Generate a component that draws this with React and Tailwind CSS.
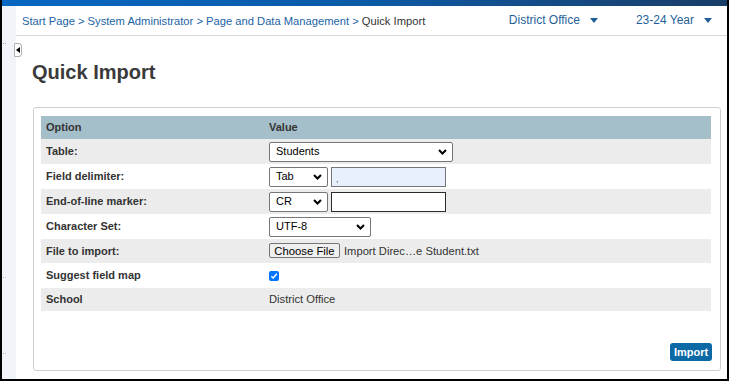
import React from "react";

const font = { fontFamily: '"Liberation Sans", Arial, sans-serif' };

function Chevron() {
  return (
    <svg width="9" height="6" viewBox="0 0 9 6" className="shrink-0">
      <path d="M1 1 L4.5 4.5 L8 1" fill="none" stroke="#000" strokeWidth="2" />
    </svg>
  );
}

function Caret() {
  return (
    <svg width="8" height="5" viewBox="0 0 8 5" className="shrink-0">
      <path d="M0 0 L8 0 L4 5 Z" fill="#1f5f99" />
    </svg>
  );
}

function Select({ w, label }) {
  return (
    <div
      className="h-[20px] border border-[#767676] rounded-[2px] bg-white flex items-center justify-between pl-[6px] pr-[5px] text-[11px] text-black"
      style={{ width: w }}
    >
      <span>{label}</span>
      <Chevron />
    </div>
  );
}

function Row({ label, h, gray, bold = true, children }) {
  return (
    <div className={`flex items-center ${gray ? "bg-[#ececec]" : "bg-white"}`} style={{ height: h }}>
      <div className={`w-[228px] pl-[5px] text-[11px] text-[#333] ${bold ? "font-bold" : ""}`}>{label}</div>
      <div className="flex items-center gap-[3px] text-[11px] text-[#333]">{children}</div>
    </div>
  );
}

export default function App() {
  return (
    <div
      className="relative w-[729px] h-[381px] bg-white border-l-2 border-r-2 border-b-2 border-black flex flex-col overflow-hidden"
      style={font}
    >
      <div className="h-[6px] shrink-0 bg-gradient-to-r from-[#0867c2] via-[#0a5aa6] to-[#183d68]" />
      <div className="flex flex-1">
        <div className="relative w-[14px] shrink-0 bg-[#f1f5f9]">
          <div className="absolute left-[1px] top-[37px] flex gap-[1px]">
            <div className="w-[1px] h-[1px] bg-[#aaa]" />
            <div className="w-[1px] h-[1px] bg-[#aaa]" />
          </div>
          <div className="absolute left-[1px] top-[271px] flex gap-[1px]">
            <div className="w-[1px] h-[1px] bg-[#bbb]" />
            <div className="w-[1px] h-[1px] bg-[#bbb]" />
          </div>
          <div className="absolute left-[1px] top-[347px] flex gap-[1px]">
            <div className="w-[1px] h-[1px] bg-[#bbb]" />
            <div className="w-[1px] h-[1px] bg-[#bbb]" />
          </div>
        </div>
        <div className="flex-1 flex flex-col">
          <div className="h-[30px] shrink-0 border-b border-[#d6d6d6] flex justify-between pl-[6px] pr-[15px]">
            <div className="mt-[9px] text-[11.2px] leading-[13px] text-[#1b63a5]">
              Start Page &gt; System Administrator &gt; Page and Data Management &gt;{" "}
              <span className="text-[#333]">Quick Import</span>
            </div>
            <div className="mt-[7px] flex items-center h-[14px] text-[12px] leading-[14px] text-[#1f5f99]">
              <span>District Office</span>
              <span className="ml-[10px]"><Caret /></span>
              <span className="ml-[38px]">23-24 Year</span>
              <span className="ml-[10px]"><Caret /></span>
            </div>
          </div>
          <div className="mt-[25px] pl-[16px] text-[20px] leading-[22px] font-bold text-[#3a3a3a]">Quick Import</div>
          <div className="mt-[24px] ml-[17px] w-[688px] h-[264px] border border-[#cfcfcf] rounded-[3px] pt-[8px] pl-[7px] flex flex-col">
            <div className="w-[670px]">
              <div className="h-[23px] bg-[#a4bfca] flex items-center text-[11px] font-bold text-[#333]">
                <div className="w-[228px] pl-[5px]">Option</div>
                <div>Value</div>
              </div>
              <Row label="Table:" h={25} gray>
                <Select w={184} label="Students" />
              </Row>
              <Row label="Field delimiter:" h={25}>
                <Select w={59} label="Tab" />
                <div className="w-[115px] h-[20px] border border-[#767676] bg-[#e8f0fe] pl-[4px] text-[9px] leading-[14px] text-[#555] flex items-end">,</div>
              </Row>
              <Row label="End-of-line marker:" h={25} gray>
                <Select w={59} label="CR" />
                <div className="w-[115px] h-[20px] border border-[#2a2a2a] bg-white" />
              </Row>
              <Row label="Character Set:" h={25}>
                <Select w={102} label="UTF-8" />
              </Row>
              <Row label="File to import:" h={24} gray>
                <div className="w-[71px] h-[15px] border border-[#767676] rounded-[2px] bg-[#efefef] flex items-center justify-center text-[11.3px] text-black">
                  Choose File
                </div>
                <span className="ml-[1px] text-[11.2px]">Import Direc…e Student.txt</span>
              </Row>
              <Row label="Suggest field map" h={25}>
                <div className="w-[10px] h-[10px] rounded-[2px] bg-[#0075ff] flex items-center justify-center">
                  <svg width="8" height="8" viewBox="0 0 8 8">
                    <path d="M1.3 4.2 L3.2 6 L6.8 1.8" fill="none" stroke="#fff" strokeWidth="1.5" />
                  </svg>
                </div>
              </Row>
              <Row label="School" h={23} gray>
                <span className="text-[11.2px]">District Office</span>
              </Row>
            </div>
            <div className="mt-auto mb-[9px] w-[671px] flex justify-end">
              <div className="w-[42px] h-[18px] rounded-[3px] bg-[#0b69a6] text-white text-[11px] font-bold flex items-center justify-center">
                Import
              </div>
            </div>
          </div>
        </div>
      </div>
      <div className="absolute left-[12px] top-[43px] w-[8px] h-[14px] bg-white border border-[#b0b0b0] rounded-r-[3px] flex items-center pl-[1px]">
        <svg width="4" height="6" viewBox="0 0 4 6">
          <path d="M4 0 L0 3 L4 6 Z" fill="#000" />
        </svg>
      </div>
    </div>
  );
}
